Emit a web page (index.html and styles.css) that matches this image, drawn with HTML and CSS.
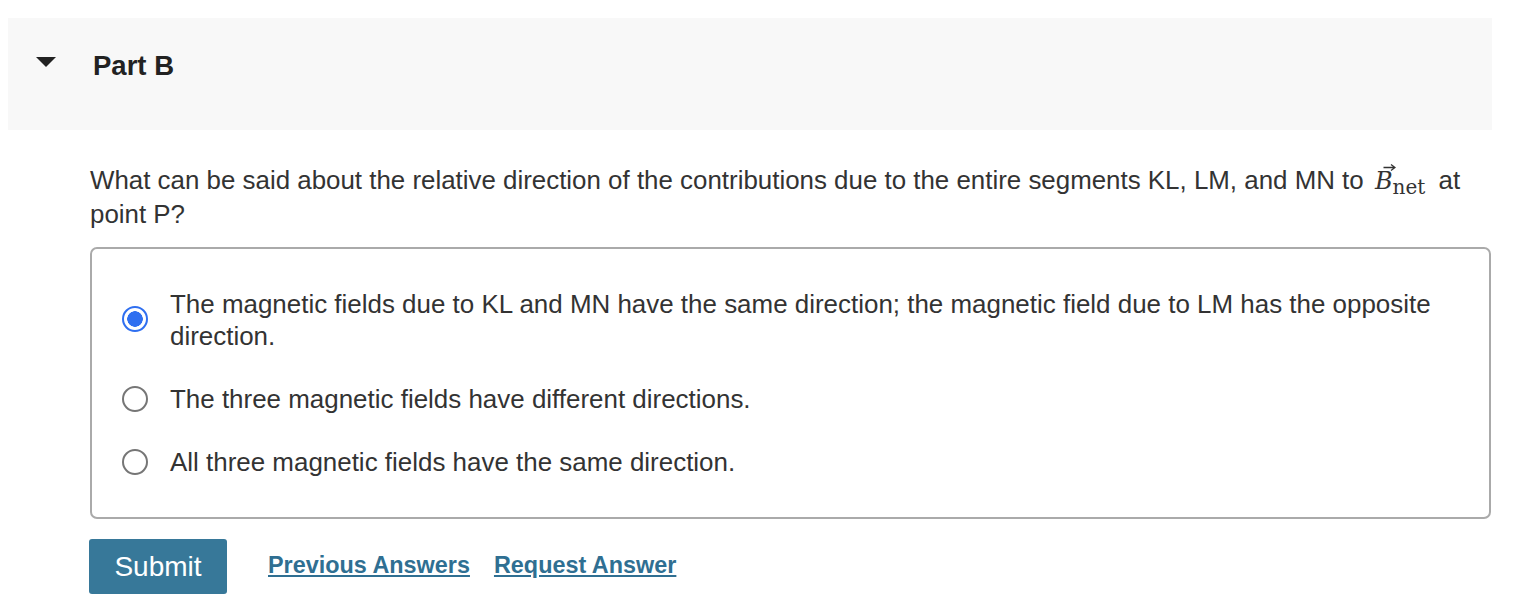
FILE: index.html
```html
<!DOCTYPE html>
<html>
<head>
<meta charset="utf-8">
<link rel="stylesheet" href="styles.css">
</head>
<body>
<div class="part-header">
  <svg class="caret" width="20" height="10" viewBox="0 0 20 10"><path d="M0 0 L20 0 L10 10 Z" fill="#222"/></svg>
  <span class="part-title">Part B</span>
</div>
<div class="content">
  <p class="question">What can be said about the relative direction of the contributions due to the entire segments KL, LM, and MN to <span class="math"><span class="vec">B<svg class="arrow" width="13" height="9" viewBox="0 0 13 9"><path d="M0.5 4.5 H11.5 M8 1.5 L12 4.5 L8 7.5" fill="none" stroke="#333" stroke-width="1.3"/></svg></span><sub>net</sub></span> at point P?</p>
  <div class="choices">
    <label class="choice">
      <span class="radio checked"></span>
      <span class="choice-text">The magnetic fields due to KL and MN have the same direction; the magnetic field due to LM has the opposite direction.</span>
    </label>
    <label class="choice">
      <span class="radio"></span>
      <span class="choice-text">The three magnetic fields have different directions.</span>
    </label>
    <label class="choice">
      <span class="radio"></span>
      <span class="choice-text">All three magnetic fields have the same direction.</span>
    </label>
  </div>
  <div class="actions">
    <button class="submit">Submit</button>
    <a class="link" href="#">Previous Answers</a>
    <a class="link" href="#">Request Answer</a>
  </div>
</div>
</body>
</html>
```
FILE: styles.css
```css
html, body {
  margin: 0;
  padding: 0;
  background: #fff;
  font-family: "Liberation Sans", Arial, sans-serif;
  color: #333;
}
.part-header {
  margin: 18px 24px 0 8px;
  height: 112px;
  background: #f8f8f8;
  display: flex;
  align-items: center;
  padding: 0 0 22px 28px;
  box-sizing: border-box;
}
.caret {
  display: block;
  margin-top: -2px;
}
.part-title {
  margin-left: 37px;
  margin-top: 6px;
  font-weight: bold;
  font-size: 27.5px;
  color: #222;
}
.content {
  padding: 0 25px 0 90px;
}
.question {
  margin: 34px 0 0 0;
  font-size: 25.9px;
  line-height: 33px;
  color: #333;
}
.math {
  font-family: "DejaVu Serif", "Liberation Serif", serif;
  white-space: nowrap;
  margin-left: 4px;
  margin-right: 6px;
}
.vec {
  position: relative;
  font-style: italic;
  font-size: 24px;
}
.arrow {
  position: absolute;
  left: 8px;
  top: -4px;
}
.math sub {
  font-size: 20px;
  vertical-align: -5px;
  line-height: 0;
  margin-left: 0;
}
.choices {
  margin-top: 16px;
  border: 2px solid #aaa;
  border-radius: 7px;
  padding: 39px 30px 39px 30px;
  display: flex;
  flex-direction: column;
  gap: 31px;
}
.choice {
  display: flex;
  align-items: center;
  font-size: 25.95px;
  line-height: 32px;
  color: #333;
}
.radio {
  flex: none;
  width: 26px;
  height: 26px;
  box-sizing: border-box;
  border: 2px solid #767676;
  border-radius: 50%;
  margin-right: 22px;
}
.radio.checked {
  border: 2px solid #2f6ff0;
  background: radial-gradient(circle, #2f6ff0 0, #2f6ff0 7.5px, #fff 8px, #fff 100%);
  margin-top: -3px;
}
.choice-text {
  display: block;
}
.actions {
  margin-top: 20px;
  display: flex;
  align-items: center;
}
.submit {
  margin-left: -1px;
  width: 138px;
  height: 55px;
  background: #377899;
  color: #fff;
  border: none;
  border-radius: 3px;
  font-family: "Liberation Sans", Arial, sans-serif;
  font-size: 28px;
  padding: 0;
}
.link {
  margin-left: 41px;
  font-weight: bold;
  font-size: 23.4px;
  color: #2f6f92;
  text-decoration: underline;
  margin-top: -2px;
}
.link + .link {
  margin-left: 24px;
}
```
